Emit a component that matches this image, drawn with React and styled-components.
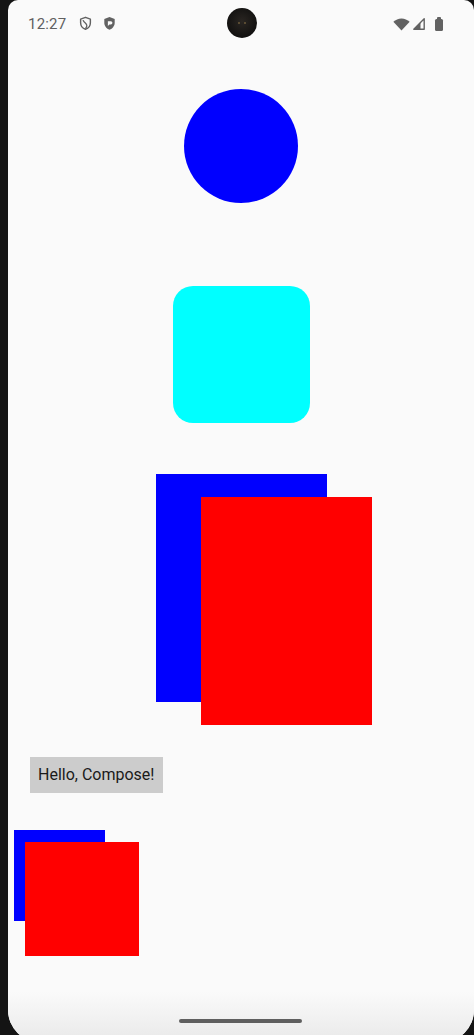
import React from 'react';
import styled, { createGlobalStyle } from 'styled-components';

const GlobalStyle = createGlobalStyle`
  html, body {
    margin: 0;
    padding: 0;
    background: #141414;
    overflow: hidden;
  }
  body {
    font-family: Roboto, "Noto Sans", sans-serif;
  }
`;

const ICON = '#626262';

function App() {
  return (
    <>
      <GlobalStyle />
      <Frame>
        <Screen>
          <StatusBar>
            <StatusLeft>
              <Clock>12:27</Clock>
              <StatusIcon viewBox="0 0 20 22" width="13" height="15">
                <path d="M10 1.5 2.5 4.3v5.6c0 4.6 3.1 8.6 7.5 10 4.4-1.4 7.5-5.4 7.5-10V4.3L10 1.5z" fill="none" stroke={ICON} strokeWidth="2.2" strokeLinejoin="round" />
                <path d="M6.5 6.5c1.5 3.5 5 4 5.5 7.5.2 1.5-.5 3-1.5 4" fill="none" stroke={ICON} strokeWidth="2" strokeLinecap="round" />
              </StatusIcon>
              <StatusIcon viewBox="0 0 20 22" width="13" height="15">
                <path d="M10 1 2 4v6c0 4.9 3.4 9.3 8 10.7 4.6-1.4 8-5.8 8-10.7V4L10 1z" fill={ICON} />
                <path d="M7.5 7.5h4.5a2.5 2.5 0 0 1 0 5H9.8l-2.3 2.3z" fill="#fafafa" />
              </StatusIcon>
            </StatusLeft>
            <Camera>
              <CameraDot />
              <CameraDot />
            </Camera>
            <StatusRight>
              <StatusIcon viewBox="0 0 24 18" width="17" height="13">
                <path d="M12 17.5 0.5 5.2C3.6 2.3 7.6 0.5 12 0.5s8.4 1.8 11.5 4.7L12 17.5z" fill={ICON} />
              </StatusIcon>
              <StatusIcon viewBox="0 0 12 12" width="12" height="12">
                <path d="M11.2 0.8v10.4H0.8L11.2 0.8z" fill="none" stroke={ICON} strokeWidth="1.4" strokeLinejoin="round" />
                <path d="M7.5 4.5v6.7H0.8L7.5 4.5z" fill={ICON} />
              </StatusIcon>
              <Battery />
            </StatusRight>
          </StatusBar>

          <Content>
            <Circle />
            <RoundedSquare />
            <BigStack>
              <Block $color="#0000ff" $w={171} $h={228} />
              <OffsetBlock $color="#ff0000" $w={171} $h={228} $dx={45} $dy={23} />
            </BigStack>
            <Label>Hello, Compose!</Label>
            <SmallStack>
              <Block $color="#0000ff" $w={91} $h={91} />
              <OffsetBlock $color="#ff0000" $w={114} $h={114} $dx={11} $dy={12} />
            </SmallStack>
          </Content>

          <NavBar>
            <HomeHandle />
          </NavBar>
        </Screen>
      </Frame>
    </>
  );
}

const Frame = styled.div`
  width: 474px;
  height: 1035px;
  padding-left: 8px;
  box-sizing: border-box;
  overflow: hidden;
`;

const Screen = styled.div`
  position: relative;
  width: 466px;
  height: 1042px;
  background: #fafafa;
  border-radius: 10px 10px 32px 32px;
  overflow: hidden;
  display: flex;
  flex-direction: column;
`;

const StatusBar = styled.div`
  height: 48px;
  display: flex;
  align-items: center;
  justify-content: space-between;
  padding: 0 31px 0 20px;
  position: relative;
`;

const StatusLeft = styled.div`
  display: flex;
  align-items: center;
  gap: 11px;
  margin-top: -1px;
`;

const StatusRight = styled.div`
  display: flex;
  align-items: center;
  gap: 3px;
`;

const Clock = styled.span`
  font-size: 15px;
  color: #606060;
  letter-spacing: 0.2px;
  margin-right: 2px;
`;

const StatusIcon = styled.svg`
  display: block;
`;

const Battery = styled.div`
  width: 8px;
  height: 12px;
  margin: 2px 0 0 7px;
  background: ${ICON};
  border-radius: 1.5px;
  position: relative;

  &::before {
    content: '';
    position: absolute;
    top: -2px;
    left: 2px;
    width: 4px;
    height: 2px;
    background: ${ICON};
    border-radius: 1px 1px 0 0;
  }
`;

const Camera = styled.div`
  position: absolute;
  left: 219px;
  top: 8px;
  width: 30px;
  height: 30px;
  border-radius: 50%;
  background: radial-gradient(circle at 50% 45%, #2a2622 0%, #121110 70%);
  display: flex;
  align-items: center;
  justify-content: center;
  gap: 4px;
`;

const CameraDot = styled.span`
  width: 2px;
  height: 2px;
  border-radius: 50%;
  background: #6b5a3a;
`;

const Content = styled.div`
  flex: 1;
  display: flex;
  flex-direction: column;
  align-items: center;
  padding-top: 41px;
`;

const Circle = styled.div`
  width: 114px;
  height: 114px;
  border-radius: 50%;
  background: #0000ff;
`;

const RoundedSquare = styled.div`
  width: 137px;
  height: 137px;
  margin-top: 83px;
  border-radius: 20px;
  background: #00ffff;
`;

const BigStack = styled.div`
  position: relative;
  margin-top: 51px;
  width: 171px;
  height: 228px;
`;

const Block = styled.div`
  width: ${(p) => p.$w}px;
  height: ${(p) => p.$h}px;
  background: ${(p) => p.$color};
`;

const OffsetBlock = styled(Block)`
  position: absolute;
  left: ${(p) => p.$dx}px;
  top: ${(p) => p.$dy}px;
`;

const Label = styled.div`
  align-self: flex-start;
  margin: 55px 0 0 22px;
  padding: 8px;
  background: #cccccc;
  color: #1a1a1a;
  font-size: 16px;
  line-height: 20px;
  width: 117px;
  white-space: nowrap;
`;

const SmallStack = styled.div`
  position: relative;
  align-self: flex-start;
  margin: 37px 0 0 6px;
  width: 91px;
  height: 91px;
`;

const NavBar = styled.div`
  height: 50px;
  display: flex;
  justify-content: center;
  align-items: flex-start;
  padding-top: 27px;
  box-sizing: border-box;
  background: linear-gradient(#fafafa, #e9e9e9);
`;

const HomeHandle = styled.div`
  width: 123px;
  height: 4px;
  border-radius: 2px;
  background: #5f5f5f;
  margin-right: 2px;
`;

export default App;
